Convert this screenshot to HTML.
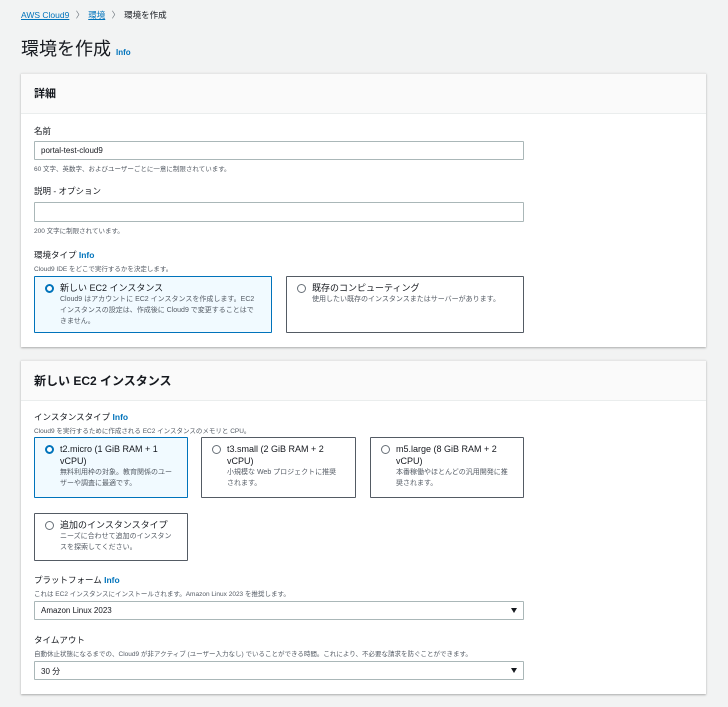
<!DOCTYPE html>
<html><head><meta charset="utf-8"><style>
*{box-sizing:border-box;margin:0;padding:0}
body{width:728px;height:707px;background:#f2f3f3;font-family:"Liberation Sans","Noto Sans CJK JP",sans-serif;color:#16191f;position:relative;overflow:hidden}
.a{position:absolute;white-space:nowrap}
.lnk{color:#0073bb}
.panel{position:absolute;left:21px;width:685px;background:#fff;box-shadow:0 1px 2px rgba(0,0,0,.3);border-top:1px solid #e6e6e6}
.ph{position:absolute;left:0;top:0;width:100%;height:40px;background:#fafafa;border-bottom:1px solid #eaeded}
.lbl{font-size:8.5px;color:#16191f}
.desc{font-size:6.5px;color:#545b64}
.inp{position:absolute;left:34px;width:490px;height:19px;border:1px solid #aab7b8;border-radius:1px;background:#fff;font-size:8px;padding:4px 6px}
.card{position:absolute;border:1px solid #545b64;border-radius:1px;background:#fff;padding:5px 14px 0 25px;font-size:9px;line-height:12px;white-space:normal}
.card.sel{border-color:#0073bb;background:#f1faff}
.card .r{position:absolute;left:10px;top:7px;width:9px;height:9px;border-radius:50%;border:1px solid #687078;background:#fff}
.card.sel .r{border:2.5px solid #0073bb}
.card .d{font-size:7px;color:#545b64;line-height:11px}
.arr{position:absolute;right:6px;top:6px;width:0;height:0;border-left:3.5px solid transparent;border-right:3.5px solid transparent;border-top:5px solid #16191f}
</style></head><body>
<div class="a" style="left:21px;top:9px;font-size:8.5px"><span class="lnk" style="text-decoration:underline">AWS Cloud9</span> <span style="color:#687078;margin:0 4px">〉</span><span class="lnk" style="text-decoration:underline">環境</span> <span style="color:#687078;margin:0 4px">〉</span>環境を作成</div>
<div class="a" style="left:21px;top:35px;font-size:18px">環境を作成 <span class="lnk" style="font-size:8px;font-weight:bold">Info</span></div>

<div class="panel" style="top:73px;height:274px">
<div class="ph"></div>
<div class="a" style="left:13px;top:11px;font-size:11px;font-weight:bold">詳細</div>
</div>
<div class="a lbl" style="left:34px;top:125px">名前</div>
<div class="inp" style="top:141px">portal-test-cloud9</div>
<div class="a desc" style="left:34px;top:163px">60 文字、英数字、およびユーザーごとに一意に制限されています。</div>
<div class="a lbl" style="left:34px;top:185px">説明 - オプション</div>
<div class="inp" style="top:202px;height:20px"></div>
<div class="a desc" style="left:34px;top:225px">200 文字に制限されています。</div>
<div class="a lbl" style="left:34px;top:249px">環境タイプ <span class="lnk" style="font-weight:bold">Info</span></div>
<div class="a desc" style="left:34px;top:263px">Cloud9 IDE をどこで実行するかを決定します。</div>
<div class="card sel" style="left:34px;top:276px;width:238px;height:57px"><div class="r"></div>新しい EC2 インスタンス<div class="d">Cloud9 はアカウントに EC2 インスタンスを作成します。EC2 インスタンスの設定は、作成後に Cloud9 で変更することはできません。</div></div>
<div class="card" style="left:286px;top:276px;width:238px;height:57px"><div class="r"></div>既存のコンピューティング<div class="d">使用したい既存のインスタンスまたはサーバーがあります。</div></div>

<div class="panel" style="top:360px;height:334px">
<div class="ph"></div>
<div class="a" style="left:13px;top:11px;font-size:12px;font-weight:bold">新しい EC2 インスタンス</div>
</div>
<div class="a lbl" style="left:34px;top:411px">インスタンスタイプ <span class="lnk" style="font-weight:bold">Info</span></div>
<div class="a desc" style="left:34px;top:425px">Cloud9 を実行するために作成される EC2 インスタンスのメモリと CPU。</div>
<div class="card sel" style="left:34px;top:437px;width:154px;height:61px"><div class="r"></div>t2.micro (1 GiB RAM + 1 vCPU)<div class="d">無料利用枠の対象。教育関係のユーザーや調査に最適です。</div></div>
<div class="card" style="left:201px;top:437px;width:155px;height:61px"><div class="r"></div>t3.small (2 GiB RAM + 2 vCPU)<div class="d">小規模な Web プロジェクトに推奨されます。</div></div>
<div class="card" style="left:370px;top:437px;width:154px;height:61px"><div class="r"></div>m5.large (8 GiB RAM + 2 vCPU)<div class="d">本番稼働やほとんどの汎用開発に推奨されます。</div></div>
<div class="card" style="left:34px;top:513px;width:154px;height:48px"><div class="r"></div>追加のインスタンスタイプ<div class="d">ニーズに合わせて追加のインスタンスを探索してください。</div></div>
<div class="a lbl" style="left:34px;top:574px">プラットフォーム <span class="lnk" style="font-weight:bold">Info</span></div>
<div class="a desc" style="left:34px;top:588px">これは EC2 インスタンスにインストールされます。Amazon Linux 2023 を推奨します。</div>
<div class="inp" style="top:601px">Amazon Linux 2023<div class="arr"></div></div>
<div class="a lbl" style="left:34px;top:634px">タイムアウト</div>
<div class="a desc" style="left:34px;top:648px">自動休止状態になるまでの、Cloud9 が非アクティブ (ユーザー入力なし) でいることができる時間。これにより、不必要な請求を防ぐことができます。</div>
<div class="inp" style="top:661px">30 分<div class="arr"></div></div>
</body></html>
